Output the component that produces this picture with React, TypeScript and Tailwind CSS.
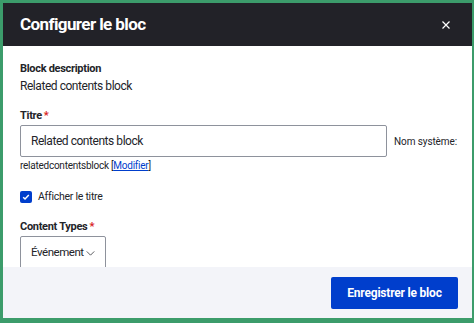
import React from 'react';

export default function App() {
  return (
    <div className="w-[474px] h-[323px] bg-[#3c9c6b] pl-[3px] pt-[3px] pr-[2px] pb-[5px] font-['Roboto',Arial,sans-serif]">
      <div className="flex h-full flex-col bg-white">
        <div className="flex h-[43px] shrink-0 items-center justify-between bg-[#222228] pl-[17px] pr-[22px]">
          <h1 className="text-[17px] font-bold tracking-[-0.6px] text-white">Configurer le bloc</h1>
          <svg className="h-[8px] w-[8px] text-white" viewBox="0 0 8 8" fill="none" stroke="currentColor" strokeWidth={1.2}>
            <path d="M0.5 0.5l7 7M7.5 0.5l-7 7" />
          </svg>
        </div>

        <div className="h-[221px] shrink-0 overflow-hidden pl-[17px] pt-[16px] text-[#232429]">
          <p className="text-[11px] font-bold leading-[14px] tracking-[-0.3px]">Block description</p>
          <p className="mt-[3px] text-[12px] leading-[14px] tracking-[-0.45px]">Related contents block</p>

          <p className="mt-[16px] text-[11px] font-bold leading-[14px] tracking-[-0.3px]">
            Titre<span className="ml-[2px] text-[#d72222]">*</span>
          </p>
          <div className="mt-[2px] flex items-center gap-[7px]">
            <div className="flex h-[32px] w-[367px] items-center rounded-[2px] border border-[#8e929c] px-[10px] text-[12px] tracking-[-0.45px]">
              Related contents block
            </div>
            <span className="text-[10px] tracking-[-0.1px]">Nom système:</span>
          </div>
          <p className="mt-[2px] text-[10px] leading-[14px] tracking-[-0.25px]">
            relatedcontentsblock [<span className="text-[#003ecc] underline">Modifier</span>]
          </p>

          <div className="mt-[17px] flex h-[14px] items-center gap-[6px]">
            <span className="flex h-[12px] w-[12px] items-center justify-center rounded-[2px] bg-[#003ecc]">
              <svg className="h-[8px] w-[8px]" viewBox="0 0 10 10" fill="none" stroke="white" strokeWidth={1.8}>
                <path d="M1.5 5.2l2.3 2.3L8.5 2.5" />
              </svg>
            </span>
            <span className="text-[10.5px] tracking-[-0.25px]">Afficher le titre</span>
          </div>

          <p className="mt-[16px] text-[11px] font-bold leading-[14px] tracking-[-0.3px]">
            Content Types<span className="ml-[2px] text-[#d72222]">*</span>
          </p>
          <div className="mt-[2px] flex h-[34px] w-[86px] items-center gap-[2px] rounded-[2px] border border-[#8e929c] pl-[10px] text-[11.5px] tracking-[-0.45px]">
            Événement
            <svg className="h-[5px] w-[9px]" viewBox="0 0 10 6" fill="none" stroke="currentColor" strokeWidth={0.9}>
              <path d="M0.5 0.5l4.5 4.5 4.5-4.5" />
            </svg>
          </div>
        </div>

        <div className="flex flex-1 items-center justify-end bg-[#f3f4f9] pr-[14px]">
          <button className="h-[32px] w-[127px] rounded-[2px] bg-[#003ecc] text-[12px] font-bold tracking-[-0.2px] text-white">
            Enregistrer le bloc
          </button>
        </div>
      </div>
    </div>
  );
}
